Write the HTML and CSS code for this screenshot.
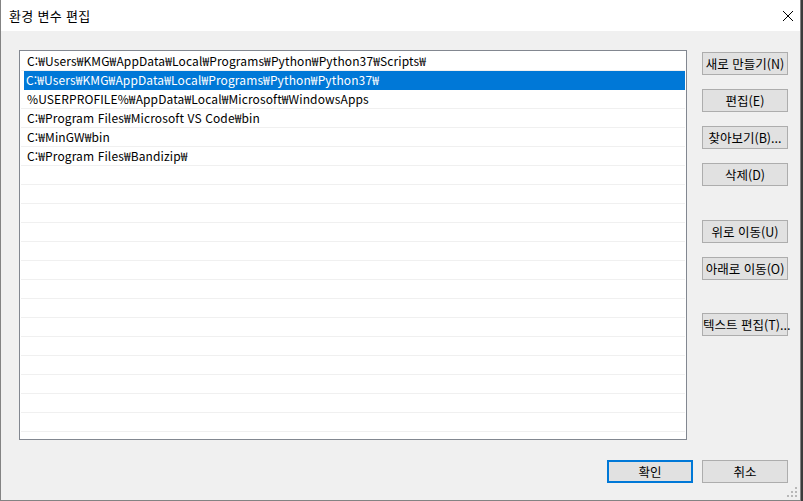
FILE: index.html
```html
<!DOCTYPE html>
<html lang="ko">
<head>
    <meta charset="UTF-8">
    <title>환경 변수 편집</title>
    <link rel="stylesheet" href="styles.css">
</head>
<body>
    <div class="window">
        <div class="titlebar">
            <span class="title">환경 변수 편집</span>
            <svg class="close" width="12" height="12" viewBox="0 0 12 12">
                <path d="M1 1 L11 11 M11 1 L1 11" stroke="#000" stroke-width="1" fill="none"/>
            </svg>
        </div>
        <div class="content">
            <div class="main">
                <div class="listbox">
                    <div class="row">C:₩Users₩KMG₩AppData₩Local₩Programs₩Python₩Python37₩Scripts₩</div>
                    <div class="row selected">C:₩Users₩KMG₩AppData₩Local₩Programs₩Python₩Python37₩</div>
                    <div class="row">%USERPROFILE%₩AppData₩Local₩Microsoft₩WindowsApps</div>
                    <div class="row">C:₩Program Files₩Microsoft VS Code₩bin</div>
                    <div class="row">C:₩MinGW₩bin</div>
                    <div class="row">C:₩Program Files₩Bandizip₩</div>
                    <div class="row"></div>
                    <div class="row"></div>
                    <div class="row"></div>
                    <div class="row"></div>
                    <div class="row"></div>
                    <div class="row"></div>
                    <div class="row"></div>
                    <div class="row"></div>
                    <div class="row"></div>
                    <div class="row"></div>
                    <div class="row"></div>
                    <div class="row"></div>
                    <div class="row"></div>
                    <div class="row"></div>
                </div>
                <div class="side">
                    <button class="btn">새로 만들기(N)</button>
                    <button class="btn">편집(E)</button>
                    <button class="btn">찾아보기(B)...</button>
                    <button class="btn">삭제(D)</button>
                    <button class="btn move-up">위로 이동(U)</button>
                    <button class="btn">아래로 이동(O)</button>
                    <button class="btn text-edit">텍스트 편집(T)...</button>
                </div>
            </div>
            <div class="footer">
                <button class="btn default">확인</button>
                <button class="btn">취소</button>
            </div>
            <svg class="grip" width="11" height="11" viewBox="0 0 11 11">
                <rect x="8" y="0" width="2" height="2" fill="#b8b8b8"/>
                <rect x="4" y="4" width="2" height="2" fill="#b8b8b8"/>
                <rect x="8" y="4" width="2" height="2" fill="#b8b8b8"/>
                <rect x="0" y="8" width="2" height="2" fill="#b8b8b8"/>
                <rect x="4" y="8" width="2" height="2" fill="#b8b8b8"/>
                <rect x="8" y="8" width="2" height="2" fill="#b8b8b8"/>
            </svg>
        </div>
    </div>
</body>
</html>
```

FILE: styles.css
```css
body { margin: 0; background: #3b3b3b; font-family: "Noto Sans CJK KR", "Noto Sans", sans-serif; font-size: 12px; color: #000; }
.window { width: 801px; height: 501px; box-sizing: border-box; border: 1px solid #838383; border-top: none; display: flex; flex-direction: column; background: #f0f0f0; }
.titlebar { height: 31px; background: #fff; display: flex; align-items: center; justify-content: space-between; padding: 0 6px 0 8px; flex-shrink: 0; }
.title { font-size: 13px; line-height: 1; letter-spacing: 0.3px; }
.close { display: block; margin-right: 0; }
.content { position: relative; flex: 1; padding: 19px 12px 0 18px; }
.main { display: flex; gap: 15px; }
.listbox { width: 668px; height: 390px; box-sizing: border-box; border: 1px solid #828790; background: #fff; padding-top: 1px; overflow: hidden; }
.row { height: 18px; line-height: 18px; border-bottom: 1px solid #f0f0f0; margin: 0 1px; padding-left: 6px; white-space: nowrap; letter-spacing: 0.12px; }
.row.selected { background: #0078d7; color: #fff; border-bottom-color: #0078d7; margin-left: 4px; padding-left: 2px; }
.side { display: flex; flex-direction: column; gap: 14px; padding-top: 2px; }
.btn { width: 86px; height: 23px; box-sizing: border-box; border: 1px solid #adadad; background: #e1e1e1; font-family: inherit; font-size: 12.5px; color: #000; padding: 0; white-space: nowrap; }
.move-up { margin-top: 20px; }
.text-edit { margin-top: 19px; }
.footer { display: flex; justify-content: flex-end; gap: 9px; margin-top: 20px; }
.btn.default { border: 2px solid #0078d7; }
.grip { position: absolute; right: 2px; bottom: 2px; }
```
